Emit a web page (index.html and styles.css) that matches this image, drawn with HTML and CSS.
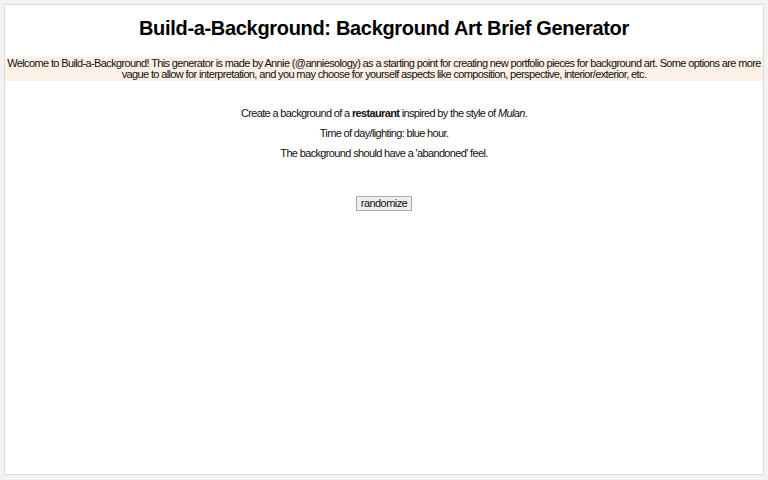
FILE: index.html
```html
<!DOCTYPE html>
<html>
<head>
<meta charset="utf-8">
<title>Build-a-Background</title>
<link rel="stylesheet" href="styles.css">
</head>
<body>
<div class="panel">
  <h1 class="title">Build-a-Background: Background Art Brief Generator</h1>
  <div class="intro">Welcome to Build-a-Background! This generator is made by Annie (@anniesology) as a starting point for creating new portfolio pieces for background art. Some options are more vague to allow for interpretation, and you may choose for yourself aspects like composition, perspective, interior/exterior, etc.</div>
  <div class="brief">
    <p>Create a background of a <b>restaurant</b> inspired by the style of <i>Mulan</i>.</p>
    <p>Time of day/lighting: blue hour.</p>
    <p>The background should have a 'abandoned' feel.</p>
  </div>
  <div class="actions">
    <button class="randomize" type="button">randomize</button>
  </div>
</div>
</body>
</html>
```
FILE: styles.css
```css
html, body {
  margin: 0;
  padding: 0;
}

body {
  background: #f3f3f3;
  font-family: "Liberation Sans", Arial, sans-serif;
  color: #111;
  padding: 4px 4px 5px 4px;
  box-sizing: border-box;
  height: 480px;
}

.panel {
  background: #fff;
  border: 1px solid #dcdcdc;
  height: 100%;
  box-sizing: border-box;
}

.title {
  font-size: 20px;
  font-weight: bold;
  text-align: center;
  letter-spacing: -0.32px;
  margin: 12px 0 17px;
  line-height: 23px;
  color: #000;
}

.intro {
  background: #fcf0e7;
  font-size: 11px;
  line-height: 11px;
  letter-spacing: -0.63px;
  text-align: center;
  padding: 1px 0;
}

.brief {
  margin-top: 26px;
  text-align: center;
  font-size: 11px;
  letter-spacing: -0.65px;
}

.brief p {
  margin: 0 0 7px;
  line-height: 13px;
}

.actions {
  text-align: center;
  margin-top: 33px;
}

.randomize {
  font-family: "Liberation Sans", Arial, sans-serif;
  font-size: 11px;
  letter-spacing: -0.55px;
  color: #111;
  background: #f0f0f0;
  border: 1px solid #a9a9a9;
  padding: 1px 4px;
  line-height: 11px;
}
```
